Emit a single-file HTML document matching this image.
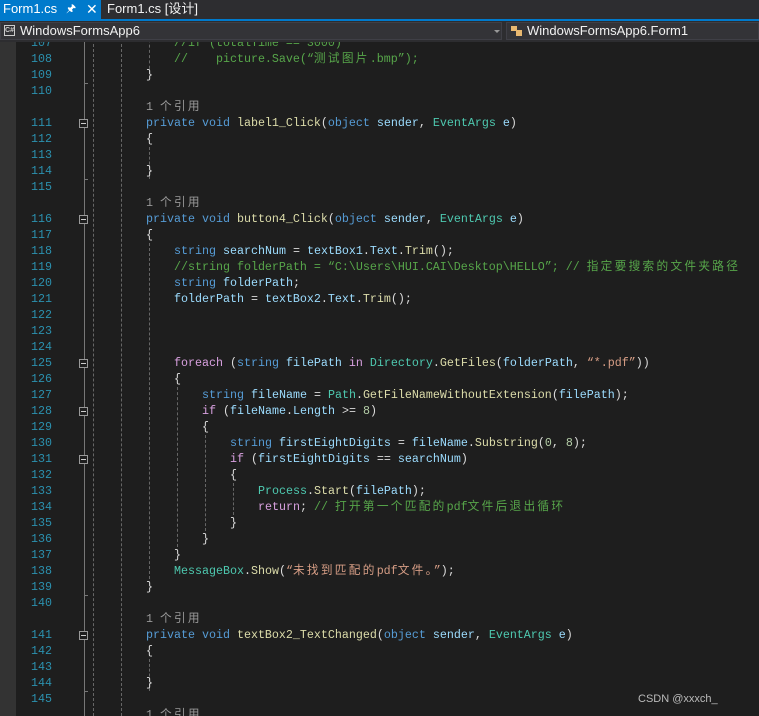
<!DOCTYPE html>
<html><head><meta charset="utf-8"><style>
html,body{margin:0;width:759px;height:716px;overflow:hidden}
body{background:#1e1e1e;position:relative;font-family:"Liberation Sans","Noto Sans CJK SC",sans-serif}
.code{position:absolute;left:0;top:35px;width:759px}
.r{position:absolute;left:0;height:16px;width:759px;line-height:16px;font-family:"Liberation Mono","Noto Sans CJK SC",monospace;font-size:11.67px;color:#dcdcdc;white-space:pre}
.n{position:absolute;left:16px;width:36px;text-align:right;color:#2b91af}
.t{position:absolute}
.c{letter-spacing:2.3px}
.k{color:#569cd6}.ty{color:#4ec9b0}.cm{color:#57a64a}.s{color:#d69d85}.m{color:#dcdcaa}.v{color:#9cdcfe}.p{color:#d8a0df}.g{color:#999}.nu{color:#b5cea8}
.fold{position:absolute;left:79px;width:7px;height:7px;border:1px solid #999;background:#1e1e1e}
.fold:after{content:"";position:absolute;left:1px;top:3px;width:5px;height:1px;background:#ccc}
.gd{position:absolute;width:0;border-left:1px dashed #666}
</style></head><body>
<div style="position:absolute;left:0;top:0;width:16px;height:716px;background:#333333"></div>
<div style="position:absolute;left:84px;top:34px;width:1px;height:682px;background:#777"></div>
<div class="gd" style="left:93px;top:34px;height:682px"></div>
<div class="gd" style="left:121px;top:34px;height:682px"></div>
<div class="gd" style="left:149px;top:34px;height:40px"></div>
<div class="gd" style="left:149px;top:147px;height:32px"></div>
<div class="gd" style="left:149px;top:243px;height:336px"></div>
<div class="gd" style="left:149px;top:659px;height:32px"></div>
<div class="gd" style="left:177px;top:387px;height:160px"></div>
<div class="gd" style="left:205px;top:435px;height:96px"></div>
<div class="gd" style="left:233px;top:483px;height:32px"></div>
<div style="position:absolute;left:84px;top:83px;width:4px;height:1px;background:#777"></div>
<div style="position:absolute;left:84px;top:179px;width:4px;height:1px;background:#777"></div>
<div style="position:absolute;left:84px;top:595px;width:4px;height:1px;background:#777"></div>
<div style="position:absolute;left:84px;top:691px;width:4px;height:1px;background:#777"></div>
<div class="code">
<div class="r" style="top:0"><span class="n">107</span><span class="t cm" style="left:174px">//if (totalTime == 3000)</span></div>
<div class="r" style="top:16px"><span class="n">108</span><span class="t cm" style="left:174px">//    picture.Save(“<span class="c">测试图片</span>.bmp”);</span></div>
<div class="r" style="top:32px"><span class="n">109</span><span class="t" style="left:146px">}</span></div>
<div class="r" style="top:48px"><span class="n">110</span></div>
<div class="r" style="top:64px"><span class="t g" style="left:146px">1 <span class="c">个引用</span></span></div>
<div class="r" style="top:80px"><span class="n">111</span><span class="fold" style="top:4px"></span><span class="t" style="left:146px"><span class="k">private</span> <span class="k">void</span> <span class="m">label1_Click</span>(<span class="k">object</span> <span class="v">sender</span>, <span class="ty">EventArgs</span> <span class="v">e</span>)</span></div>
<div class="r" style="top:96px"><span class="n">112</span><span class="t" style="left:146px">{</span></div>
<div class="r" style="top:112px"><span class="n">113</span></div>
<div class="r" style="top:128px"><span class="n">114</span><span class="t" style="left:146px">}</span></div>
<div class="r" style="top:144px"><span class="n">115</span></div>
<div class="r" style="top:160px"><span class="t g" style="left:146px">1 <span class="c">个引用</span></span></div>
<div class="r" style="top:176px"><span class="n">116</span><span class="fold" style="top:4px"></span><span class="t" style="left:146px"><span class="k">private</span> <span class="k">void</span> <span class="m">button4_Click</span>(<span class="k">object</span> <span class="v">sender</span>, <span class="ty">EventArgs</span> <span class="v">e</span>)</span></div>
<div class="r" style="top:192px"><span class="n">117</span><span class="t" style="left:146px">{</span></div>
<div class="r" style="top:208px"><span class="n">118</span><span class="t" style="left:174px"><span class="k">string</span> <span class="v">searchNum</span> = <span class="v">textBox1</span>.<span class="v">Text</span>.<span class="m">Trim</span>();</span></div>
<div class="r" style="top:224px"><span class="n">119</span><span class="t cm" style="left:174px">//string folderPath = “C:\Users\HUI.CAI\Desktop\HELLO”; // <span class="c">指定要搜索的文件夹路径</span></span></div>
<div class="r" style="top:240px"><span class="n">120</span><span class="t" style="left:174px"><span class="k">string</span> <span class="v">folderPath</span>;</span></div>
<div class="r" style="top:256px"><span class="n">121</span><span class="t" style="left:174px"><span class="v">folderPath</span> = <span class="v">textBox2</span>.<span class="v">Text</span>.<span class="m">Trim</span>();</span></div>
<div class="r" style="top:272px"><span class="n">122</span></div>
<div class="r" style="top:288px"><span class="n">123</span></div>
<div class="r" style="top:304px"><span class="n">124</span></div>
<div class="r" style="top:320px"><span class="n">125</span><span class="fold" style="top:4px"></span><span class="t" style="left:174px"><span class="p">foreach</span> (<span class="k">string</span> <span class="v">filePath</span> <span class="p">in</span> <span class="ty">Directory</span>.<span class="m">GetFiles</span>(<span class="v">folderPath</span>, <span class="s">“*.pdf”</span>))</span></div>
<div class="r" style="top:336px"><span class="n">126</span><span class="t" style="left:174px">{</span></div>
<div class="r" style="top:352px"><span class="n">127</span><span class="t" style="left:202px"><span class="k">string</span> <span class="v">fileName</span> = <span class="ty">Path</span>.<span class="m">GetFileNameWithoutExtension</span>(<span class="v">filePath</span>);</span></div>
<div class="r" style="top:368px"><span class="n">128</span><span class="fold" style="top:4px"></span><span class="t" style="left:202px"><span class="p">if</span> (<span class="v">fileName</span>.<span class="v">Length</span> &gt;= <span class="nu">8</span>)</span></div>
<div class="r" style="top:384px"><span class="n">129</span><span class="t" style="left:202px">{</span></div>
<div class="r" style="top:400px"><span class="n">130</span><span class="t" style="left:230px"><span class="k">string</span> <span class="v">firstEightDigits</span> = <span class="v">fileName</span>.<span class="m">Substring</span>(<span class="nu">0</span>, <span class="nu">8</span>);</span></div>
<div class="r" style="top:416px"><span class="n">131</span><span class="fold" style="top:4px"></span><span class="t" style="left:230px"><span class="p">if</span> (<span class="v">firstEightDigits</span> == <span class="v">searchNum</span>)</span></div>
<div class="r" style="top:432px"><span class="n">132</span><span class="t" style="left:230px">{</span></div>
<div class="r" style="top:448px"><span class="n">133</span><span class="t" style="left:258px"><span class="ty">Process</span>.<span class="m">Start</span>(<span class="v">filePath</span>);</span></div>
<div class="r" style="top:464px"><span class="n">134</span><span class="t" style="left:258px"><span class="p">return</span>; <span class="cm">// <span class="c">打开第一个匹配的</span>pdf<span class="c">文件后退出循环</span></span></span></div>
<div class="r" style="top:480px"><span class="n">135</span><span class="t" style="left:230px">}</span></div>
<div class="r" style="top:496px"><span class="n">136</span><span class="t" style="left:202px">}</span></div>
<div class="r" style="top:512px"><span class="n">137</span><span class="t" style="left:174px">}</span></div>
<div class="r" style="top:528px"><span class="n">138</span><span class="t" style="left:174px"><span class="ty">MessageBox</span>.<span class="m">Show</span>(<span class="s">“<span class="c">未找到匹配的</span>pdf<span class="c">文件。</span>”</span>);</span></div>
<div class="r" style="top:544px"><span class="n">139</span><span class="t" style="left:146px">}</span></div>
<div class="r" style="top:560px"><span class="n">140</span></div>
<div class="r" style="top:576px"><span class="t g" style="left:146px">1 <span class="c">个引用</span></span></div>
<div class="r" style="top:592px"><span class="n">141</span><span class="fold" style="top:4px"></span><span class="t" style="left:146px"><span class="k">private</span> <span class="k">void</span> <span class="m">textBox2_TextChanged</span>(<span class="k">object</span> <span class="v">sender</span>, <span class="ty">EventArgs</span> <span class="v">e</span>)</span></div>
<div class="r" style="top:608px"><span class="n">142</span><span class="t" style="left:146px">{</span></div>
<div class="r" style="top:624px"><span class="n">143</span></div>
<div class="r" style="top:640px"><span class="n">144</span><span class="t" style="left:146px">}</span></div>
<div class="r" style="top:656px"><span class="n">145</span></div>
<div class="r" style="top:672px"><span class="t g" style="left:146px">1 <span class="c">个引用</span></span></div>
</div>
<div style="position:absolute;left:0;top:0;width:759px;height:19px;background:#2d2d30"></div>
<div style="position:absolute;left:0;top:0;width:101px;height:19px;background:#007acc;color:#fff;font-size:13px;line-height:18px"><span style="position:absolute;left:3px">Form1.cs</span><span style="position:absolute;left:66px;font-size:11px">&#x1F588;</span><span style="position:absolute;left:86px;font-size:14px">✕</span></div>
<div style="position:absolute;left:107px;top:0;color:#f1f1f1;font-size:13px;line-height:18px">Form1.cs [设计]</div>
<div style="position:absolute;left:0;top:19px;width:759px;height:2px;background:#007acc"></div>
<div style="position:absolute;left:0;top:21px;width:759px;height:21px;background:#2d2d30"></div>
<div style="position:absolute;left:0;top:22px;width:502px;height:18px;background:#333337;border:1px solid #3f3f46;box-sizing:border-box"></div>
<div style="position:absolute;left:4px;top:25px;width:9px;height:9px;border:1px solid #ccc;color:#ccc;font-size:7px;line-height:9px;text-align:center;font-weight:bold">C#</div>
<div style="position:absolute;left:20px;top:22px;color:#f1f1f1;font-size:13px;line-height:18px">WindowsFormsApp6</div>
<div style="position:absolute;left:494px;top:30px;border-left:3px solid transparent;border-right:3px solid transparent;border-top:3px solid #999"></div>
<div style="position:absolute;left:506px;top:22px;width:253px;height:18px;background:#333337;border:1px solid #3f3f46;box-sizing:border-box"></div>
<div style="position:absolute;left:511px;top:26px;width:6px;height:5px;background:#e8b870"></div>
<div style="position:absolute;left:516px;top:30px;width:6px;height:6px;background:#e8b870"></div>
<div style="position:absolute;left:527px;top:22px;color:#f1f1f1;font-size:13px;line-height:18px">WindowsFormsApp6.Form1</div>
<div style="position:absolute;left:638px;top:693px;color:#bbb;font-size:11px">CSDN @xxxch_</div>
</body></html>
